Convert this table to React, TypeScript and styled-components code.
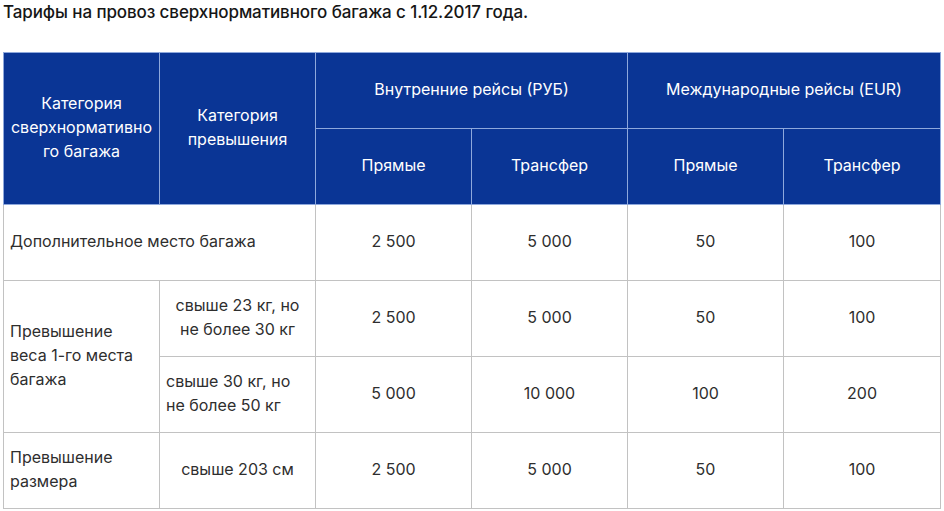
import styled, { createGlobalStyle } from "styled-components";

const GlobalStyle = createGlobalStyle`
  html, body {
    margin: 0;
    padding: 0;
    background: #ffffff;
  }
  body {
    font-family: Inter, "Noto Sans", "Liberation Sans", sans-serif;
  }
`;

const Page = styled.div`
  width: 944px;
  height: 511px;
  padding: 1px 0 0 3px;
  box-sizing: border-box;
  overflow: hidden;
`;

const Title = styled.h1`
  margin: 0 0 28px;
  font-size: 17px;
  line-height: 23px;
  font-weight: 500;
  color: #161616;
  letter-spacing: -0.1px;
`;

const Table = styled.table`
  width: 937px;
  table-layout: fixed;
  border-collapse: collapse;
  font-size: 16px;
  line-height: 24px;
`;

const HeadRow = styled.tr`
  height: 76px;
  background: #0a3595;
`;

const HeadCell = styled.th`
  border: 1px solid #8ea8dc;
  color: #ffffff;
  font-weight: 400;
  text-align: center;
  vertical-align: middle;
  padding: 0 4px 4px;
`;

const BodyRow = styled.tr`
  height: 76px;
`;

const Cell = styled.td<{ $align?: "left" | "center"; $pad?: number }>`
  border: 1px solid #c2c2c2;
  color: #2e2e2e;
  font-weight: 400;
  text-align: ${(p) => p.$align ?? "center"};
  vertical-align: middle;
  padding: 0 4px 4px ${(p) => p.$pad ?? 4}px;
`;

const rows = [
  {
    label: ["свыше 23 кг, но", "не более 30 кг"],
    align: "center" as const,
    pad: 4,
    v: ["2 500", "5 000", "50", "100"],
  },
  {
    label: ["свыше 30 кг, но", "не более 50 кг"],
    align: "left" as const,
    pad: 6,
    v: ["5 000", "10 000", "100", "200"],
  },
];

export default function App() {
  return (
    <Page>
      <GlobalStyle />
      <Title>Тарифы на провоз сверхнормативного багажа с 1.12.2017 года.</Title>
      <Table>
        <colgroup>
          <col style={{ width: 156 }} />
          <col style={{ width: 156 }} />
          <col style={{ width: 156 }} />
          <col style={{ width: 156 }} />
          <col style={{ width: 156 }} />
          <col style={{ width: 157 }} />
        </colgroup>
        <thead>
          <HeadRow>
            <HeadCell rowSpan={2}>
              Категория
              <br />
              сверхнормативно
              <br />
              го багажа
            </HeadCell>
            <HeadCell rowSpan={2}>
              Категория
              <br />
              превышения
            </HeadCell>
            <HeadCell colSpan={2}>Внутренние рейсы (РУБ)</HeadCell>
            <HeadCell colSpan={2}>Международные рейсы (EUR)</HeadCell>
          </HeadRow>
          <HeadRow>
            <HeadCell>Прямые</HeadCell>
            <HeadCell>Трансфер</HeadCell>
            <HeadCell>Прямые</HeadCell>
            <HeadCell>Трансфер</HeadCell>
          </HeadRow>
        </thead>
        <tbody>
          <BodyRow>
            <Cell $align="left" $pad={6} colSpan={2}>
              Дополнительное место багажа
            </Cell>
            <Cell>2 500</Cell>
            <Cell>5 000</Cell>
            <Cell>50</Cell>
            <Cell>100</Cell>
          </BodyRow>
          {rows.map((r, i) => (
            <BodyRow key={r.label[0] + i}>
              {i === 0 && (
                <Cell $align="left" $pad={6} rowSpan={2}>
                  Превышение
                  <br />
                  веса 1-го места
                  <br />
                  багажа
                </Cell>
              )}
              <Cell $align={r.align} $pad={r.pad}>
                {r.label[0]}
                <br />
                {r.label[1]}
              </Cell>
              {r.v.map((x, j) => (
                <Cell key={j}>{x}</Cell>
              ))}
            </BodyRow>
          ))}
          <BodyRow>
            <Cell $align="left" $pad={6}>
              Превышение
              <br />
              размера
            </Cell>
            <Cell>свыше 203 см</Cell>
            <Cell>2 500</Cell>
            <Cell>5 000</Cell>
            <Cell>50</Cell>
            <Cell>100</Cell>
          </BodyRow>
        </tbody>
      </Table>
    </Page>
  );
}
